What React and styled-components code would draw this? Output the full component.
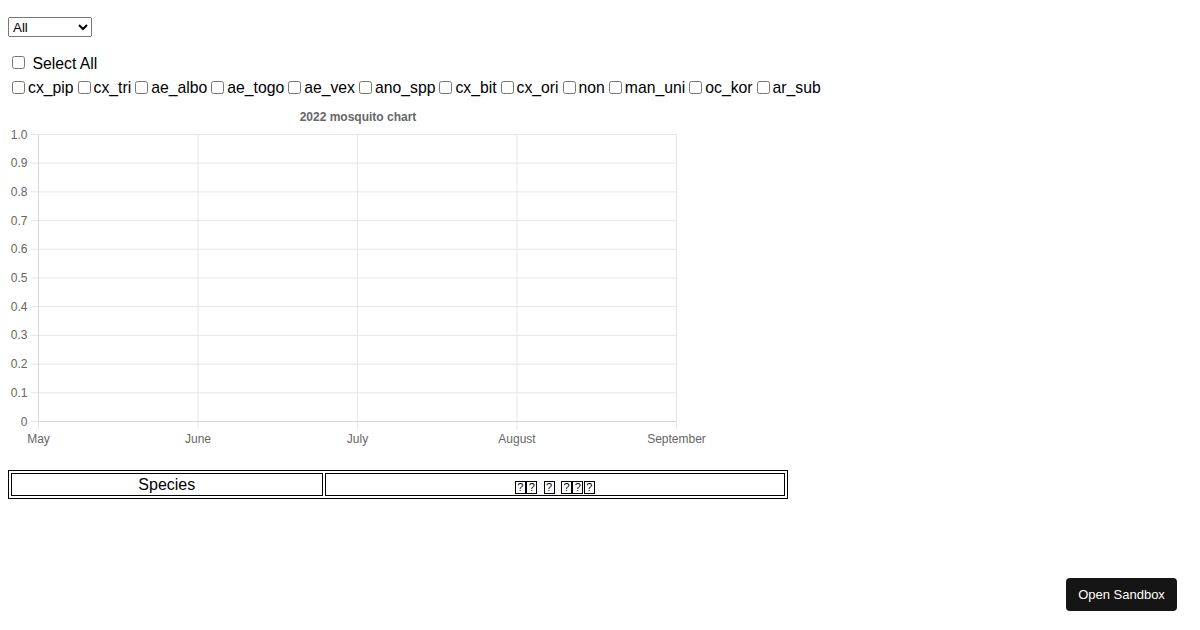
import React from 'react';
import styled, { createGlobalStyle } from 'styled-components';

const GlobalStyle = createGlobalStyle`
  body {
    margin: 8px;
    font-family: "Liberation Sans", Arial, sans-serif;
    font-size: 16px;
    color: #000;
    background: #fff;
  }
`;

const SPECIES = [
  'cx_pip', 'cx_tri', 'ae_albo', 'ae_togo', 'ae_vex', 'ano_spp',
  'cx_bit', 'cx_ori', 'non', 'man_uni', 'oc_kor', 'ar_sub',
];

const MONTHS = ['May', 'June', 'July', 'August', 'September'];

const FilterBar = styled.div`
  padding-top: 9px;
  height: 20px;
`;

const Select = styled.select`
  width: 84px;
  height: 20px;
  font-family: "Liberation Sans", Arial, sans-serif;
  font-size: 13.33px;
`;

const SelectAllRow = styled.label`
  display: block;
  margin-top: 16px;
  line-height: 19px;
  font-size: 15.8px;
`;

const SpeciesRow = styled.div`
  display: flex;
  flex-wrap: wrap;
  margin-top: 5px;
  line-height: 19px;
  font-size: 15.75px;
`;

const SpeciesItem = styled.label`
  display: inline-flex;
  align-items: center;
  input {
    margin: 3px 3px 3px 4px;
  }
`;

const ChartBox = styled.div`
  width: 700px;
  height: 345px;
  margin-top: 9px;
`;

const ChartSvg = styled.svg`
  display: block;
  font-family: "Liberation Sans", Arial, sans-serif;
`;

const DataTable = styled.table`
  width: 780px;
  margin-top: 19px;
  border: 1px solid #000;
  border-spacing: 2px;
`;

const Cell = styled.td`
  border: 1px solid #000;
  text-align: center;
  height: 21px;
  padding: 1px;
  box-sizing: border-box;
  width: ${(props) => props.$width}px;
`;

const Tofu = styled.span`
  display: inline-block;
  box-sizing: border-box;
  width: 11px;
  height: 13px;
  margin: 0 0.2px;
  border: 1px solid #000;
  font-size: 11px;
  line-height: 11px;
  text-align: center;
  vertical-align: -2px;
`;

const Gap = styled.span`
  display: inline-block;
  width: 6px;
`;

const SandboxButton = styled.button`
  position: fixed;
  right: 23px;
  bottom: 19px;
  width: 111px;
  height: 33px;
  border: none;
  border-radius: 4px;
  background: #151515;
  color: #fff;
  font-family: "Liberation Sans", Arial, sans-serif;
  font-size: 13px;
  cursor: pointer;
`;

function Chart() {
  const left = 30.5;
  const right = 668.5;
  const top = 28.5;
  const bottom = 315.5;
  const rowH = (bottom - top) / 10;
  const colW = (right - left) / 4;
  const grid = '#e6e6e6';

  return (
    <ChartSvg width="700" height="345" viewBox="0 0 700 345">
      <text x="350" y="15" textAnchor="middle" fontSize="12" fontWeight="bold" fill="#666">
        2022 mosquito chart
      </text>
      {Array.from({ length: 11 }, (_, i) => {
        const y = top + i * rowH;
        const label = i === 10 ? '0' : (1 - i / 10).toFixed(1);
        return (
          <g key={`y${i}`}>
            <line x1={left - 8} x2={right} y1={y} y2={y} stroke={grid} strokeWidth="1" />
            <text x={left - 11} y={y + 4} textAnchor="end" fontSize="12" fill="#666">{label}</text>
          </g>
        );
      })}
      {MONTHS.map((m, i) => {
        const x = left + i * colW;
        return (
          <g key={m}>
            <line x1={x} x2={x} y1={top} y2={bottom + 8} stroke={grid} strokeWidth="1" />
            <text x={x} y={bottom + 21} textAnchor="middle" fontSize="12" fill="#666">{m}</text>
          </g>
        );
      })}
      <line x1={left} x2={left} y1={top} y2={bottom} stroke="#d6d6d6" strokeWidth="1" />
      <line x1={left} x2={right} y1={bottom} y2={bottom} stroke="#d6d6d6" strokeWidth="1" />
    </ChartSvg>
  );
}

export default function App() {
  return (
    <>
      <GlobalStyle />
      <FilterBar>
        <Select defaultValue="All">
          <option>All</option>
        </Select>
      </FilterBar>
      <SelectAllRow>
        <input type="checkbox" /> Select All
      </SelectAllRow>
      <SpeciesRow>
        {SPECIES.map((s) => (
          <SpeciesItem key={s}>
            <input type="checkbox" />
            {s}
          </SpeciesItem>
        ))}
      </SpeciesRow>
      <ChartBox>
        <Chart />
      </ChartBox>
      <DataTable>
        <tbody>
          <tr>
            <Cell $width={313}>Species</Cell>
            <Cell $width={463}>
              <Tofu>?</Tofu><Tofu>?</Tofu>
              <Gap />
              <Tofu>?</Tofu>
              <Gap />
              <Tofu>?</Tofu><Tofu>?</Tofu><Tofu>?</Tofu>
            </Cell>
          </tr>
        </tbody>
      </DataTable>
      <SandboxButton>Open Sandbox</SandboxButton>
    </>
  );
}
